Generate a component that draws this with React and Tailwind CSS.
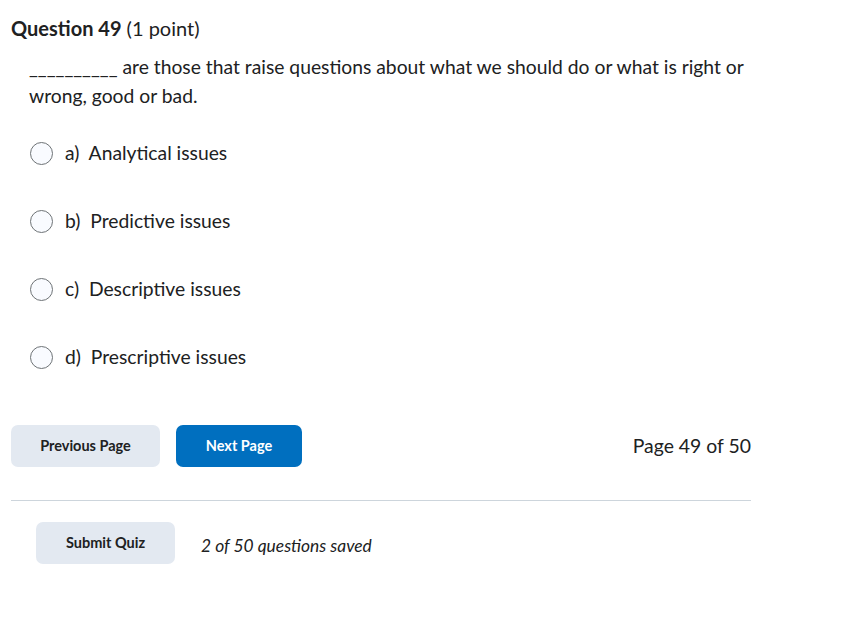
export default function App() {
  const opts = ["a)\u00a0 Analytical issues", "b)\u00a0 Predictive issues", "c)\u00a0 Descriptive issues", "d)\u00a0 Prescriptive issues"];
  return (
    <div className="w-[849px] h-[641px] bg-white text-[#202122]" style={{ fontFamily: "Lato, 'Noto Sans', sans-serif" }}>
      <div className="w-[740px] ml-[11px] pt-[15px]">
        <h2 className="text-[20px] leading-[26px]"><span className="font-bold">Question 49</span> (1 point)</h2>
        <p className="ml-[18px] w-[735px] mt-[11px] text-[19.3px] leading-[29px]">__________ are those that raise questions about what we should do or what is right or wrong, good or bad.</p>
        <div className="mt-[31px] ml-[19px] flex flex-col gap-[44px]">
          {opts.map((o) => (
            <label key={o} className="flex items-center gap-[12px] h-[24px] text-[19.3px]">
              <span className="w-[23px] h-[23px] rounded-full border border-[#6e7376] bg-[#f9fbff] shrink-0"></span>
              <span>{o}</span>
            </label>
          ))}
        </div>
        <div className="mt-[56px] flex items-center">
          <button className="w-[149px] h-[42px] rounded-[7px] bg-[#e3e9f1] text-[14.5px] font-bold">Previous Page</button>
          <button className="ml-[16px] w-[126px] h-[42px] rounded-[7px] bg-[#006fbf] text-white text-[14.5px] font-bold">Next Page</button>
          <span className="ml-auto text-[19.4px]">Page 49 of 50</span>
        </div>
        <div className="mt-[33px] h-px bg-[#cdd5dc]"></div>
        <div className="mt-[21px] ml-[25px] flex items-center">
          <button className="w-[139px] h-[42px] rounded-[7px] bg-[#e3e9f1] text-[14.5px] font-bold">Submit Quiz</button>
          <span className="ml-[26px] mt-[6px] italic text-[17.4px]">2 of 50 questions saved</span>
        </div>
      </div>
    </div>
  );
}
